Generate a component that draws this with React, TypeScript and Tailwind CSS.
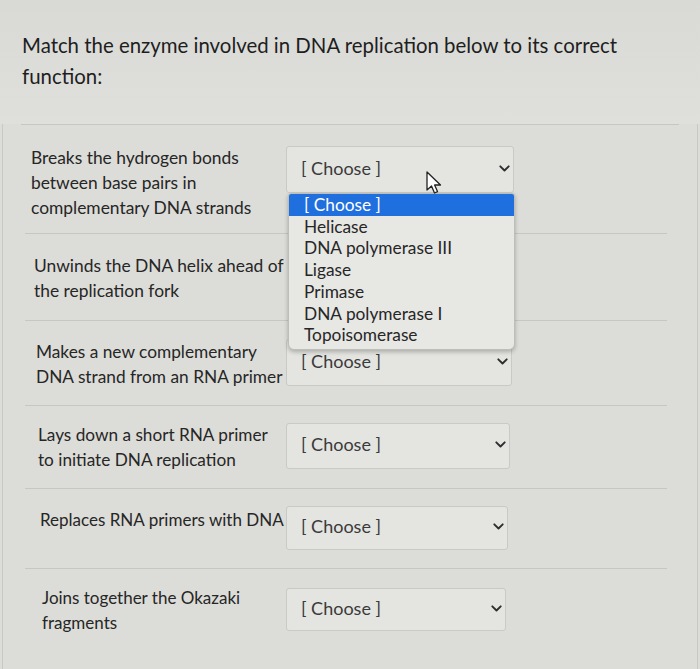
import React from "react";

const rows = [
  { h: 109, lines: ["Breaks the hydrogen bonds", "between base pairs in", "complementary DNA strands"], tx: 30, ty: 20, sy: 21, sw: 228, sh: 47, fs: 17.4 },
  { h: 87, lines: ["Unwinds the DNA helix ahead of", "the replication fork"], tx: 33, ty: 19, sy: 0, sw: 0, sh: 0, fs: 17.4 },
  { h: 85, lines: ["Makes a new complementary", "DNA strand from an RNA primer"], tx: 35, ty: 18, sy: 18, sw: 226, sh: 47, fs: 17.3 },
  { h: 83, lines: ["Lays down a short RNA primer", "to initiate DNA replication"], tx: 37, ty: 16, sy: 17, sw: 224, sh: 46, fs: 17.2 },
  { h: 80, lines: ["Replaces RNA primers with DNA"], tx: 39, ty: 18, sy: 17, sw: 222, sh: 44, fs: 17 },
  { h: 110, lines: ["Joins together the Okazaki", "fragments"], tx: 41, ty: 16, sy: 19, sw: 220, sh: 43, fs: 17 },
];

const options = ["[ Choose ]", "Helicase", "DNA polymerase III", "Ligase", "Primase", "DNA polymerase I", "Topoisomerase"];

function Chevron() {
  return (
    <svg width="11" height="7" viewBox="0 0 11 7" className="shrink-0">
      <path d="M1.3 1.3 L5.5 5.5 L9.7 1.3" fill="none" stroke="#2e2e2e" strokeWidth="1.9" strokeLinecap="round" strokeLinejoin="round" />
    </svg>
  );
}

function Select({ w, h }: { w: number; h: number }) {
  return (
    <div
      className="flex items-center justify-between rounded-[3px] border border-[#c9c9c5] bg-[#e4e4e1] pb-[3px] pl-[14px] pr-[3px] text-[18px] text-[#3a3a3a]"
      style={{ width: w, height: h }}
    >
      <span>[ Choose ]</span>
      <Chevron />
    </div>
  );
}

export default function App() {
  return (
    <div
      className="relative h-[669px] w-[700px] overflow-hidden bg-[#dcdcd8] text-[#222]"
      style={{ fontFamily: "Lato, 'Noto Sans', sans-serif" }}
    >
      <div className="h-[124px] bg-gradient-to-b from-[#d9d9d6] to-[#dfdfdc] pl-[22px] pt-[30px]">
        <p className="w-[660px] text-[20.4px] leading-[31px] text-[#1e1e1e]">
          Match the enzyme involved in DNA replication below to its correct function:
        </p>
      </div>
      <div className="mx-[2px] border-x border-[#c8c8c4] bg-[#dcdcd8]">
        {rows.map((r, i) => (
          <div key={i} className="flex border-t border-[#c6c6c2]" style={{ height: r.h, marginLeft: i === 0 ? 18 : 22, marginRight: i === 0 ? 18 : 30 }}>
            <div
              className="leading-[25px] text-[#262626]"
              style={{ fontSize: r.fs, paddingLeft: r.tx - (i === 0 ? 20 : 24), paddingTop: r.ty, width: 285 - (i === 0 ? 20 : 24) }}
            >
              {r.lines.map((l, j) => (
                <div key={j} className="whitespace-nowrap">{l}</div>
              ))}
            </div>
            <div style={{ paddingTop: r.sy }}>{r.sw > 0 && <Select w={r.sw} h={r.sh} />}</div>
          </div>
        ))}
      </div>

      <div className="absolute left-[288px] top-[193px] w-[227px] overflow-hidden rounded-b-[6px] rounded-t-[3px] border border-[#bdbdb9] bg-[#e7e7e4] pb-[3px] text-[17.3px] leading-[21.7px] text-[#262626] shadow-[0_2px_4px_rgba(0,0,0,0.25)]">
        {options.map((o, i) => (
          <div key={i} className={i === 0 ? "bg-[#1f6fde] pl-[15px] text-white" : "pl-[15px]"}>
            {o}
          </div>
        ))}
      </div>

      <svg className="absolute left-[425px] top-[170px]" width="18" height="26" viewBox="0 0 18 26">
        <path d="M2 2 L2 20 L6.5 16 L9.5 23 L12.5 21.6 L9.6 15 L15.5 15 Z" fill="#fff" stroke="#222" strokeWidth="1.3" strokeLinejoin="round" />
      </svg>
    </div>
  );
}
